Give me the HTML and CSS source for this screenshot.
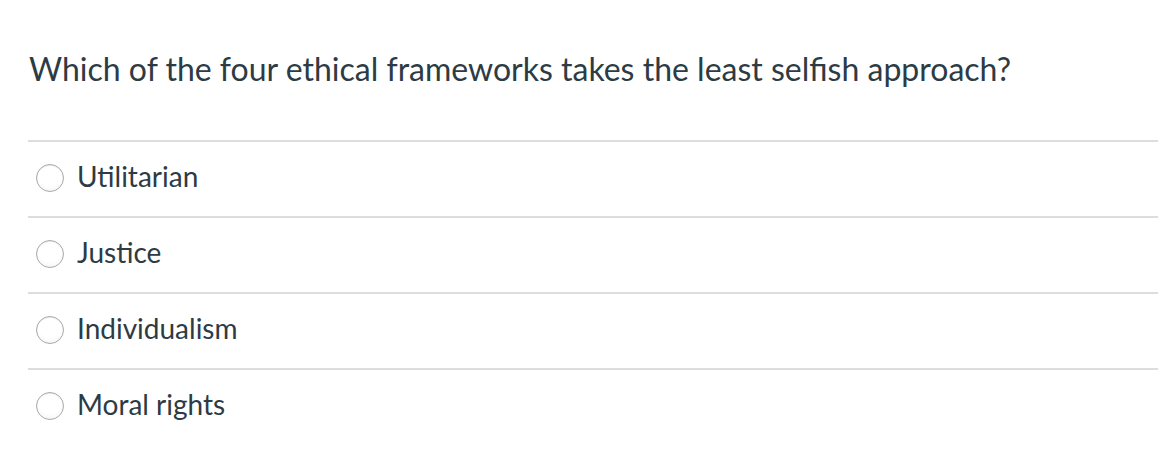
FILE: index.html
```html
<!DOCTYPE html>
<html>
<head>
<meta charset="utf-8">
<link rel="stylesheet" href="styles.css">
</head>
<body>
<div class="question">
  <div class="question-text">Which of the four ethical frameworks takes the least selfish approach?</div>
  <div class="answers">
    <label class="answer"><span class="radio"></span><span class="answer-text">Utilitarian</span></label>
    <label class="answer"><span class="radio"></span><span class="answer-text">Justice</span></label>
    <label class="answer"><span class="radio"></span><span class="answer-text">Individualism</span></label>
    <label class="answer"><span class="radio"></span><span class="answer-text">Moral rights</span></label>
  </div>
</div>
</body>
</html>
```
FILE: styles.css
```css
html, body {
  margin: 0;
  padding: 0;
  background: #ffffff;
}
body {
  font-family: Lato, "Open Sans", sans-serif;
  color: #2d3b45;
}
.question {
  padding: 49px 0 0 28px;
}
.question-text {
  font-size: 32px;
  line-height: 40px;
  padding-left: 1px;
  margin-bottom: 51px;
}
.answers {
  display: flex;
  flex-direction: column;
}
.answer {
  display: flex;
  align-items: center;
  height: 72px;
  padding-bottom: 2px;
  box-sizing: content-box;
  border-top: 2px solid #dddddd;
  gap: 13px;
  padding-left: 8px;
}
.radio {
  width: 28px;
  height: 28px;
  box-sizing: border-box;
  border-radius: 50%;
  border: 1px solid #a9a9a9;
  background: radial-gradient(circle at 50% 30%, #ffffff 55%, #f1f1f1 100%);
  box-shadow: inset 0 1px 1px rgba(0,0,0,0.08);
  flex: none;
}
.answer-text {
  font-size: 28px;
  line-height: 32px;
  margin-bottom: 4px;
}
```
